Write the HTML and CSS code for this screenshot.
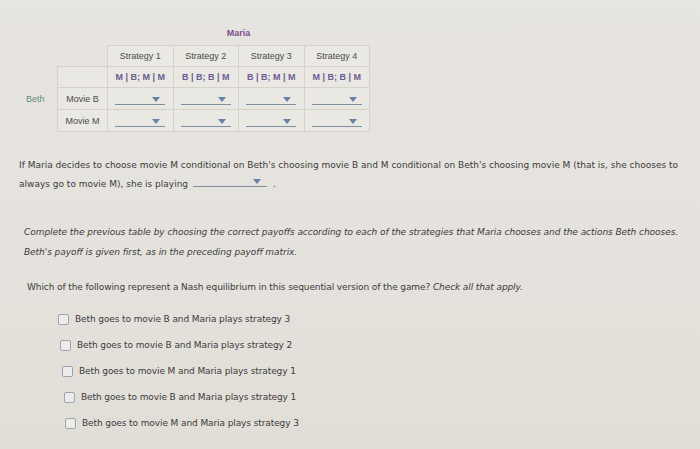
FILE: index.html
```html
<!DOCTYPE html>
<html>
<head>
<meta charset="utf-8">
<link rel="stylesheet" href="styles.css">
</head>
<body>
<div class="page">
  <div class="matrix">
    <div class="maria">Maria</div>
    <table class="grid">
      <tr class="r-head">
        <td class="beth"></td>
        <td class="blank"></td>
        <td class="cell">Strategy 1</td>
        <td class="cell">Strategy 2</td>
        <td class="cell">Strategy 3</td>
        <td class="cell">Strategy 4</td>
      </tr>
      <tr class="r-strat">
        <td class="beth"></td>
        <td class="cell"></td>
        <td class="cell code">M | B; M | M</td>
        <td class="cell code">B | B; B | M</td>
        <td class="cell code">B | B; M | M</td>
        <td class="cell code">M | B; B | M</td>
      </tr>
      <tr class="r-body">
        <td class="beth">Beth</td>
        <td class="cell label">Movie B</td>
        <td class="cell"><span class="dd"><span class="arrow"></span></span></td>
        <td class="cell"><span class="dd"><span class="arrow"></span></span></td>
        <td class="cell"><span class="dd"><span class="arrow"></span></span></td>
        <td class="cell"><span class="dd"><span class="arrow"></span></span></td>
      </tr>
      <tr class="r-body">
        <td class="beth"></td>
        <td class="cell label">Movie M</td>
        <td class="cell"><span class="dd"><span class="arrow"></span></span></td>
        <td class="cell"><span class="dd"><span class="arrow"></span></span></td>
        <td class="cell"><span class="dd"><span class="arrow"></span></span></td>
        <td class="cell"><span class="dd"><span class="arrow"></span></span></td>
      </tr>
    </table>
  </div>

  <p class="p1"><span class="ln">If Maria decides to choose movie M conditional on Beth's choosing movie B and M conditional on Beth's choosing movie M (that is, she chooses to</span><span class="ln">always go to movie M), she is playing <span class="dd inline"><span class="arrow"></span></span><span class="dot">.</span></span></p>

  <p class="p2">Complete the previous table by choosing the correct payoffs according to each of the strategies that Maria chooses and the actions Beth chooses. Beth's payoff is given first, as in the preceding payoff matrix.</p>

  <p class="q">Which of the following represent a Nash equilibrium in this sequential version of the game? <em>Check all that apply.</em></p>

  <ul class="opts">
    <li class="opt o1"><span class="box"></span>Beth goes to movie B and Maria plays strategy 3</li>
    <li class="opt o2"><span class="box"></span>Beth goes to movie B and Maria plays strategy 2</li>
    <li class="opt o3"><span class="box"></span>Beth goes to movie M and Maria plays strategy 1</li>
    <li class="opt o4"><span class="box"></span>Beth goes to movie B and Maria plays strategy 1</li>
    <li class="opt o5"><span class="box"></span>Beth goes to movie M and Maria plays strategy 3</li>
  </ul>
</div>
</body>
</html>
```

FILE: styles.css
```css
html, body {
  margin: 0;
  padding: 0;
}
body {
  width: 700px;
  height: 449px;
  overflow: hidden;
  background: linear-gradient(180deg, #e7e5e1 0%, #e5e2dd 60%, #e1ded7 100%);
  font-family: "DejaVu Sans", Verdana, sans-serif;
  color: #3b3b3b;
}
.page {
  padding-top: 27px;
}
.matrix {
  width: 370px;
}
.maria {
  margin-left: 108px;
  width: 261px;
  text-align: center;
  font-family: "Liberation Sans", Arial, sans-serif;
  font-weight: bold;
  font-size: 9px;
  color: #7b4f8d;
  height: 18px;
  line-height: 12px;
}
.grid {
  border-collapse: collapse;
  font-family: "Liberation Sans", Arial, sans-serif;
  font-size: 9px;
  color: #4a4a4a;
}
.grid td {
  padding: 0;
  text-align: center;
  vertical-align: middle;
}
.beth {
  width: 58px;
  border: none;
  text-align: left !important;
  padding-left: 26px !important;
  box-sizing: border-box;
  color: #5f8c84;
}
.blank {
  width: 50px;
}
.cell {
  border: 1px solid #d6d2ca;
  background: #eae8e3;
}
.r-head .blank {
  border: none;
  background: transparent;
}
.r-head td { height: 20px; }
.r-strat td { height: 20px; }
.r-body td { height: 21px; }
.cell.label {
  width: 50px;
  color: #4a4a4a;
}
.grid .cell:nth-child(n+3) {
  width: 65px;
}
.code {
  color: #6a5c90;
  font-weight: bold;
}
.dd {
  display: inline-block;
  position: relative;
  width: 50px;
  height: 10px;
  border-bottom: 1px solid #7e8ea3;
  vertical-align: middle;
  margin-top: 2px;
}
.arrow {
  position: absolute;
  right: 5px;
  top: 3px;
  width: 0;
  height: 0;
  border-left: 4px solid transparent;
  border-right: 4px solid transparent;
  border-top: 5px solid #6684a6;
}
.dd.inline {
  width: 74px;
  margin-left: 2px;
  vertical-align: baseline;
  height: 9px;
}
.dd.inline .arrow {
  right: 6px;
  top: 2px;
}
.dot {
  margin-left: 6px;
}
p {
  margin: 0;
  font-size: 9px;
}
.p1 {
  margin-top: 24px;
  padding-left: 19px;
  width: 672px;
  line-height: 19px;
}
.ln {
  display: block;
  white-space: nowrap;
}
.p2 {
  margin-top: 28px;
  padding-left: 24px;
  width: 658px;
  line-height: 20px;
  font-style: italic;
  letter-spacing: -0.05px;
}
.q {
  margin-top: 15px;
  padding-left: 27px;
  line-height: 20px;
  letter-spacing: -0.1px;
}
.opts {
  list-style: none;
  margin: 9px 0 0 0;
  padding: 0;
}
.opt {
  display: flex;
  align-items: center;
  height: 26px;
  font-size: 9px;
  letter-spacing: -0.1px;
}
.box {
  width: 9px;
  height: 9px;
  border: 1px solid #9aa4b2;
  border-radius: 2px;
  background: #eeece8;
  margin-right: 6px;
  flex: none;
}
.o1 { padding-left: 58px; }
.o2 { padding-left: 60px; }
.o3 { padding-left: 62px; }
.o4 { padding-left: 64px; }
.o5 { padding-left: 65px; }
```
